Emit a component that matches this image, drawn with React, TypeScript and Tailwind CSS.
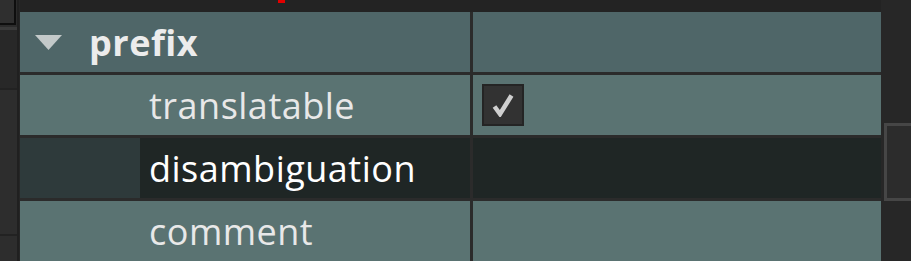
import React from "react";

const font = { fontFamily: '"Open Sans", "Noto Sans", sans-serif' };

export default function App() {
  return (
    <div className="w-[911px] h-[261px] overflow-hidden bg-[#262626] flex" style={font}>
      {/* left strip */}
      <div className="w-[17px] h-full flex flex-col bg-[#2b2b2b]">
        <div className="h-[25px] w-[16px] bg-[#2f2f2f] border-r-2 border-b-2 border-[#0e0e0e]" />
        <div className="h-[2px] bg-[#2b2b2b]" />
        <div className="h-[3px] bg-[#3a3a3a]" />
        <div className="h-[58px] bg-[#282828]" />
        <div className="h-[2px] bg-[#222222]" />
        <div className="h-[144px] bg-[#2d2d2d]" />
        <div className="h-[2px] bg-[#222222]" />
        <div className="flex-1 bg-[#2d2d2d]" />
      </div>
      <div className="w-[2px] h-full bg-[#202020]" />
      <div className="w-[1px] h-full bg-[#262626]" />

      {/* table */}
      <div className="w-[861px] h-full flex flex-col">
        <div className="h-[12px] bg-[#232323] relative">
          <div className="absolute left-[258px] top-0 w-[7px] h-[3px] bg-[#e30000]" />
        </div>
        <div className="flex-1 flex flex-col gap-[3px] bg-[#2b2b2b]">
          {/* prefix */}
          <div className="h-[60px] flex gap-[3px]">
            <div className="w-[450px] bg-[#4f6668] flex items-center">
              <svg className="ml-[15px]" width="27" height="15" viewBox="0 0 27 15">
                <polygon points="0,0 27,0 13.5,15" fill="#c3c9c9" />
              </svg>
              <span className="ml-[27px] text-[36px] font-bold tracking-[0.5px] text-[#ececec] leading-[49px]">prefix</span>
            </div>
            <div className="flex-1 bg-[#4f6668]" />
          </div>
          {/* translatable */}
          <div className="h-[60px] flex gap-[3px]">
            <div className="w-[450px] bg-[#5a7372] flex items-center pl-[129px]">
              <span className="text-[36px] tracking-[0.5px] text-[#e8e8e8] leading-[49px]">translatable</span>
            </div>
            <div className="flex-1 bg-[#5a7372] flex items-center pl-[9px]">
              <div className="w-[42px] h-[42px] bg-[#323232] border-2 border-[#242424] flex items-center justify-center">
                <svg width="24" height="24" viewBox="0 0 24 24">
                  <path d="M3.5 13.5 L9 21 L20.5 2.5" fill="none" stroke="#cfcfcf" strokeWidth="4.5" strokeLinecap="butt" strokeLinejoin="miter" />
                </svg>
              </div>
            </div>
          </div>
          {/* disambiguation */}
          <div className="h-[60px] flex gap-[3px]">
            <div className="w-[450px] flex">
              <div className="w-[120px] bg-[#2e3a3b]" />
              <div className="flex-1 bg-[#1f2625] flex items-center pl-[9px]">
                <span className="text-[36px] tracking-[0.5px] text-white leading-[49px]">disambiguation</span>
              </div>
            </div>
            <div className="flex-1 bg-[#1f2625]" />
          </div>
          {/* comment */}
          <div className="h-[60px] flex gap-[3px]">
            <div className="w-[450px] bg-[#5a7372] flex items-center pl-[129px]">
              <span className="text-[36px] tracking-[0.5px] text-[#e8e8e8] leading-[49px]">comment</span>
            </div>
            <div className="flex-1 bg-[#5a7372]" />
          </div>
        </div>
      </div>

      {/* scrollbar */}
      <div className="w-[30px] h-full bg-[#272727] flex flex-col pl-[3px]">
        <div className="h-[123px]" />
        <div className="h-[78px] bg-[#2c2c2c] border-t-[3px] border-l-[3px] border-b-[3px] border-[#464646]" />
      </div>
    </div>
  );
}
